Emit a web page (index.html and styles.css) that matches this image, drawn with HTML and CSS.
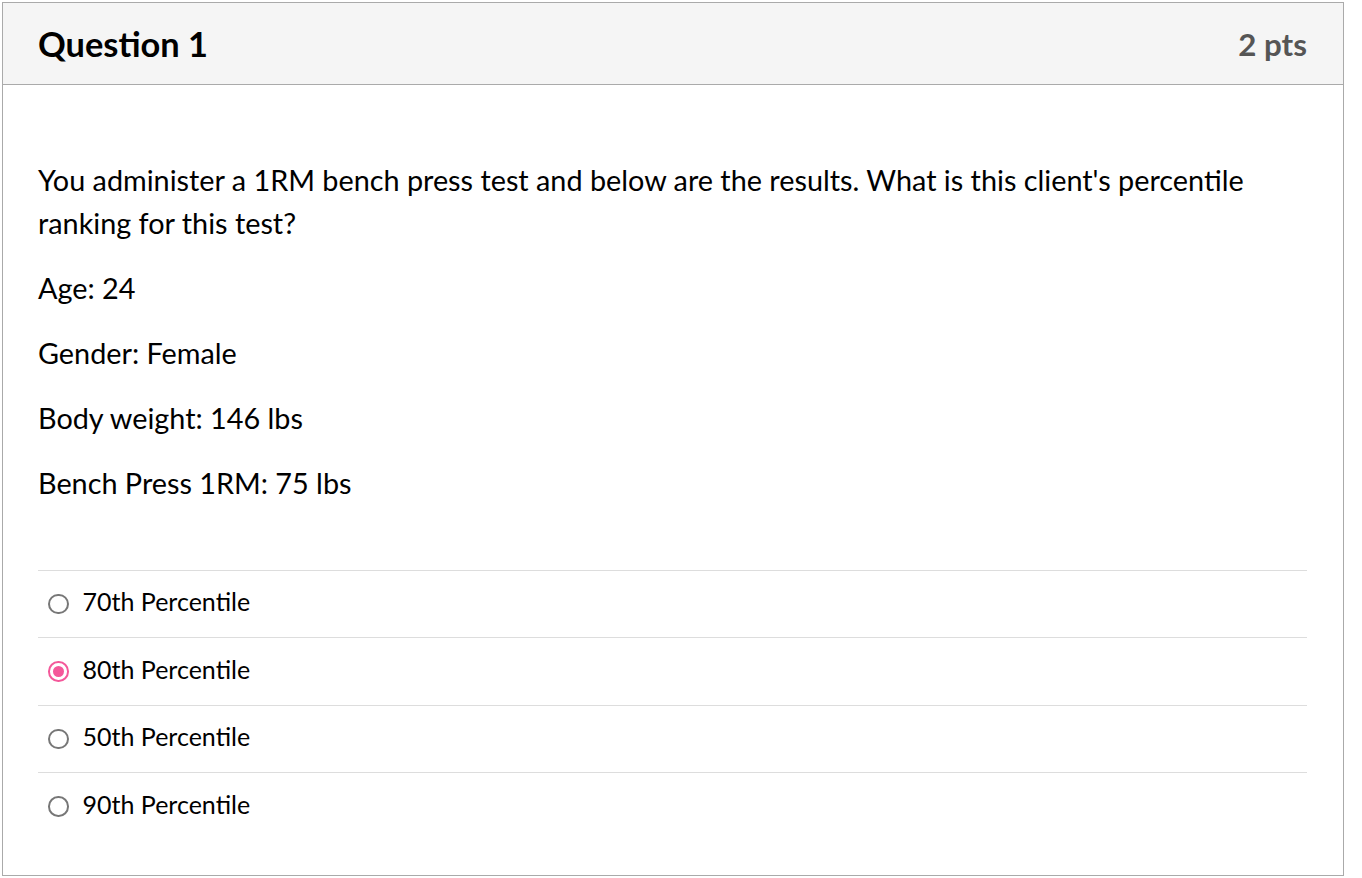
FILE: index.html
```html
<!DOCTYPE html>
<html>
<head>
<meta charset="utf-8">
<link rel="stylesheet" href="styles.css">
</head>
<body>
<div class="question">
  <div class="header">
    <h2 class="title">Question 1</h2>
    <div class="pts">2 pts</div>
  </div>
  <div class="content">
    <div class="text">
      <p>You administer a 1RM bench press test and below are the results. What is this client's percentile ranking for this test?</p>
      <p>Age: 24</p>
      <p>Gender: Female</p>
      <p>Body weight: 146 lbs</p>
      <p>Bench Press 1RM: 75 lbs</p>
    </div>
    <div class="answers">
      <label class="answer"><span class="radio"></span><span>70th Percentile</span></label>
      <label class="answer"><span class="radio checked"></span><span>80th Percentile</span></label>
      <label class="answer"><span class="radio"></span><span>50th Percentile</span></label>
      <label class="answer"><span class="radio"></span><span>90th Percentile</span></label>
    </div>
  </div>
</div>
</body>
</html>
```

FILE: styles.css
```css
html, body {
  margin: 0;
  padding: 0;
  background: #fff;
}
body {
  font-family: Lato, "Liberation Sans", sans-serif;
  color: #000;
  padding: 2px 0 0 2px;
}
.question {
  width: 1340px;
  height: 872px;
  border: 1px solid #aaaaaa;
  background: #fff;
  box-sizing: content-box;
}
.header {
  height: 81px;
  background: #f5f5f5;
  border-bottom: 1px solid #aaaaaa;
  display: flex;
  align-items: center;
  justify-content: space-between;
  padding: 0 36px 0 35px;
}
.title {
  margin: 0;
  font-size: 34.4px;
  font-weight: 700;
  color: #000;
}
.pts {
  font-size: 31.3px;
  font-weight: 700;
  color: #555;
}
.content {
  padding: 73.5px 36px 0 35px;
}
.text p {
  margin: 0 0 21.8px 0;
  font-size: 28.8px;
  line-height: 43px;
}
.text p:first-child {
  line-height: 43.5px;
}
.answers {
  margin-top: 65px;
}
.answer {
  display: flex;
  align-items: center;
  gap: 14px;
  height: 66.5px;
  border-top: 1px solid #dddddd;
  font-size: 25px;
  padding-left: 10px;
}
.answer span:last-child {
  margin-bottom: 5px;
}
.radio {
  width: 16.5px;
  height: 16.5px;
  border: 2px solid #777;
  border-radius: 50%;
  box-sizing: content-box;
  flex: none;
}
.radio.checked {
  border-color: #f4589a;
  position: relative;
}
.radio.checked::after {
  content: "";
  position: absolute;
  left: 2.75px;
  top: 2.75px;
  width: 11px;
  height: 11px;
  border-radius: 50%;
  background: #f4589a;
}
```
